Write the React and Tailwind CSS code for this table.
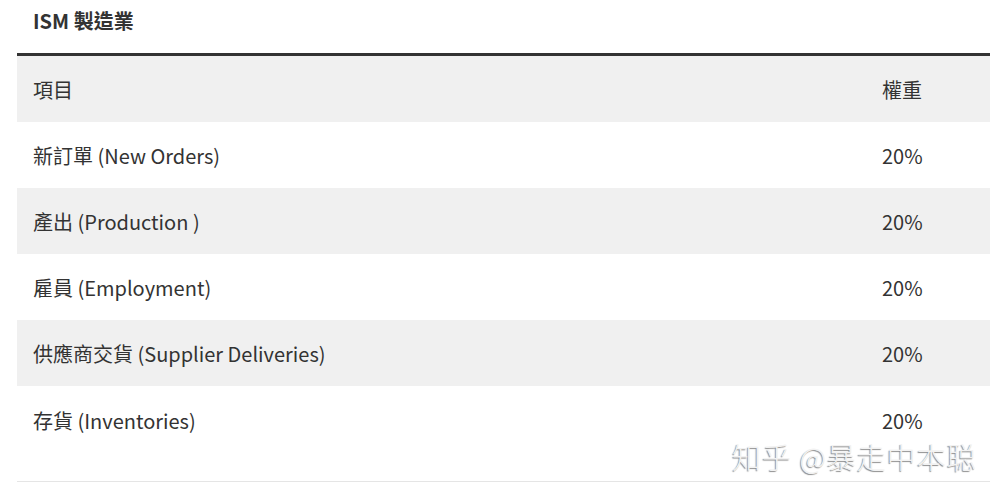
import React from 'react';

const rows = [
  ['新訂單 (New Orders)', '20%'],
  ['產出 (Production )', '20%'],
  ['雇員 (Employment)', '20%'],
  ['供應商交貨 (Supplier Deliveries)', '20%'],
  ['存貨 (Inventories)', '20%'],
];

export default function App() {
  return (
    <div className="relative w-[1003px] h-[495px] bg-white text-[#333] overflow-hidden" style={{ fontFamily: '"Noto Sans CJK TC", "Noto Sans", sans-serif' }}>
      <div className="pl-[17px] w-[990px]">
        <h2 className="pl-4 pt-[6px] h-[53px] text-[20px] font-bold leading-[30px]">ISM 製造業</h2>
        <div className="border-t-[3px] border-[#333] border-b border-b-[#e5e5e5]">
          <div className="flex h-[66px] items-center pt-[2px] bg-[#f0f0f0] text-[20px]">
            <div className="flex-1 pl-4">項目</div>
            <div className="w-[108px]">權重</div>
          </div>
          {rows.map(([name, w], i) => (
            <div key={i} className={`flex text-[20px] ${i % 2 === 1 ? 'bg-[#f0f0f0]' : 'bg-white'} ${i === rows.length - 1 ? 'h-[95px] items-start pt-[20px]' : 'h-[66px] items-center pt-[2px]'}`}>
              <div className="flex-1 pl-4">{name}</div>
              <div className="w-[108px]">{w}</div>
            </div>
          ))}
        </div>
      </div>
      <div className="absolute left-[732px] top-[435px] text-[29px] font-light text-[#f2f2f2] tracking-[1px]" style={{ textShadow: '-1px 1px 1px #8a8a8a' }}>
        知乎 @暴走中本聪
      </div>
    </div>
  );
}
